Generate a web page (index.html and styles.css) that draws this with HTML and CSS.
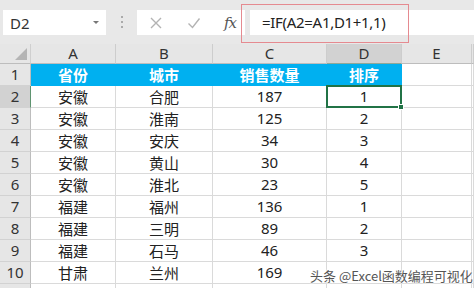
FILE: index.html
```html
<!DOCTYPE html>
<html lang="zh">
<head>
<meta charset="utf-8">
<link rel="stylesheet" href="styles.css">
</head>
<body>
<div class="app">
  <div class="toolbar">
    <div class="namebox"><span class="nb-text">D2</span><span class="nb-arrow"></span></div>
    <div class="dots"><i></i><i></i><i></i></div>
    <div class="iconbox">
      <svg class="ic" width="14" height="14" viewBox="0 0 14 14"><path d="M2 2 L12 12 M12 2 L2 12" stroke="#b3b3b3" stroke-width="1.4" fill="none"/></svg>
      <svg class="ic" width="14" height="14" viewBox="0 0 14 14"><path d="M1.5 7.5 L5.5 11.5 L12.5 2.5" stroke="#b3b3b3" stroke-width="1.4" fill="none"/></svg>
      <span class="fx">fx</span>
    </div>
    <div class="formula">=IF(A2=A1,D1+1,1)</div>
    <div class="highlight"></div>
  </div>
  <div class="sheet">
    <div class="corner"><span class="tri"></span></div>
    <div class="ch">A</div><div class="ch">B</div><div class="ch">C</div><div class="ch sel">D</div><div class="ch">E</div><div class="ch last"></div>

    <div class="rh">1</div><div class="c hd">省份</div><div class="c hd">城市</div><div class="c hd">销售数量</div><div class="c hd">排序</div><div class="c"></div><div class="c"></div>
    <div class="rh sel">2</div><div class="c">安徽</div><div class="c">合肥</div><div class="c num">187</div><div class="c num active">1<span class="handle"></span></div><div class="c"></div><div class="c"></div>
    <div class="rh">3</div><div class="c">安徽</div><div class="c">淮南</div><div class="c num">125</div><div class="c num">2</div><div class="c"></div><div class="c"></div>
    <div class="rh">4</div><div class="c">安徽</div><div class="c">安庆</div><div class="c num">34</div><div class="c num">3</div><div class="c"></div><div class="c"></div>
    <div class="rh">5</div><div class="c">安徽</div><div class="c">黄山</div><div class="c num">30</div><div class="c num">4</div><div class="c"></div><div class="c"></div>
    <div class="rh">6</div><div class="c">安徽</div><div class="c">淮北</div><div class="c num">23</div><div class="c num">5</div><div class="c"></div><div class="c"></div>
    <div class="rh">7</div><div class="c">福建</div><div class="c">福州</div><div class="c num">136</div><div class="c num">1</div><div class="c"></div><div class="c"></div>
    <div class="rh">8</div><div class="c">福建</div><div class="c">三明</div><div class="c num">89</div><div class="c num">2</div><div class="c"></div><div class="c"></div>
    <div class="rh">9</div><div class="c">福建</div><div class="c">石马</div><div class="c num">46</div><div class="c num">3</div><div class="c"></div><div class="c"></div>
    <div class="rh">10</div><div class="c">甘肃</div><div class="c">兰州</div><div class="c num">169</div><div class="c num"></div><div class="c"></div><div class="c"></div>
    <div class="rh"></div><div class="c"></div><div class="c"></div><div class="c"></div><div class="c"></div><div class="c"></div><div class="c"></div>
  </div>
  <div class="watermark">头条 @Excel函数编程可视化</div>
</div>
</body>
</html>
```

FILE: styles.css
```css
* { box-sizing: border-box; }
html, body { margin: 0; padding: 0; }
body {
  width: 474px;
  height: 288px;
  overflow: hidden;
  background: #fff;
  font-family: "Noto Sans", "Noto Sans CJK SC", sans-serif;
  color: #222;
}
.app { position: relative; width: 474px; height: 288px; overflow: hidden; }

.toolbar {
  position: relative;
  height: 44px;
  background: #e8e8e8;
  display: flex;
  align-items: center;
  padding-left: 3px;
}
.namebox {
  width: 103px;
  height: 25px;
  background: #fff;
  display: flex;
  align-items: center;
  justify-content: space-between;
  padding: 0 7px 0 7px;
  margin-top: 1px;
}
.nb-text { font-size: 15px; color: #333; }
.nb-arrow {
  width: 0; height: 0;
  border-left: 3px solid transparent;
  border-right: 3px solid transparent;
  border-top: 3px solid #777;
}
.dots {
  width: 31px;
  display: flex;
  flex-direction: column;
  align-items: center;
  gap: 3px;
}
.dots i { display: block; width: 2px; height: 2px; background: #aaa; }
.iconbox {
  width: 108px;
  height: 25px;
  margin-top: 1px;
  background: #fff;
  display: flex;
  align-items: center;
  padding-left: 12px;
}
.iconbox .ic { margin-right: 24px; }
.iconbox .ic + .ic { margin-right: 23px; }
.fx {
  font-family: "DejaVu Serif", "Liberation Serif", serif;
  font-style: italic;
  font-size: 15px;
  color: #555;
  letter-spacing: -1px;
}
.formula {
  flex: 1;
  height: 25px;
  margin-top: 1px;
  margin-left: 5px;
  background: #fff;
  font-size: 15px;
  line-height: 25px;
  padding-left: 12px;
  color: #222;
  letter-spacing: -0.3px;
}
.highlight {
  position: absolute;
  left: 241px;
  top: 4px;
  width: 168px;
  height: 39px;
  border: 1.5px solid #e58a90;
}

.sheet {
  display: grid;
  grid-template-columns: 31px 85px 97px 114px 75px 70px 1fr;
  grid-template-rows: 20px repeat(11, 22px);
}
.corner {
  position: relative;
  background: #e6e6e6;
  border-right: 1px solid #cfcfcf;
  border-bottom: 1px solid #bdbdbd;
}
.tri {
  position: absolute;
  right: 3px;
  bottom: 3px;
  width: 0; height: 0;
  border-left: 12px solid transparent;
  border-bottom: 12px solid #b5b5b5;
}
.ch {
  background: #e6e6e6;
  border-right: 1px solid #cdcdcd;
  border-bottom: 1px solid #bdbdbd;
  text-align: center;
  font-size: 15px;
  line-height: 19px;
  color: #333;
}
.ch.sel { background: #d2d2d2; border-bottom: 1px solid #8fa898; }
.rh {
  background: #e6e6e6;
  border-right: 1px solid #bdbdbd;
  border-bottom: 1px solid #d2d2d2;
  text-align: center;
  font-size: 15px;
  line-height: 21px;
  color: #333;
}
.rh.sel { background: #d2d2d2; border-right: 1px solid #5f9470; }
.c {
  border-right: 1px solid #dadada;
  border-bottom: 1px solid #dadada;
  text-align: center;
  font-family: "Noto Sans CJK SC", sans-serif;
  font-size: 15px;
  line-height: 21px;
  color: #222;
  position: relative;
}
.c.num { font-family: "Noto Sans", "Noto Sans CJK SC", sans-serif; }
.c.hd {
  background: #00b0f0;
  color: #fff;
  font-weight: bold;
  border-right-color: #00b0f0;
  border-bottom-color: #00b0f0;
}
.c.active {
  border: 2px solid #217346;
  margin: -1px 0 0 -1px;
  line-height: 19px;
  z-index: 2;
}
.handle {
  position: absolute;
  right: -4px;
  bottom: -4px;
  width: 6px;
  height: 6px;
  background: #217346;
  border: 1px solid #fff;
}
.watermark {
  position: absolute;
  left: 310px;
  top: 267px;
  font-family: "Noto Sans CJK SC", sans-serif;
  font-size: 13px;
  line-height: 18px;
  color: #555;
  text-shadow: 0 0 2px #fff, 0 0 2px #fff, 0 0 3px #fff;
  white-space: nowrap;
}
```
